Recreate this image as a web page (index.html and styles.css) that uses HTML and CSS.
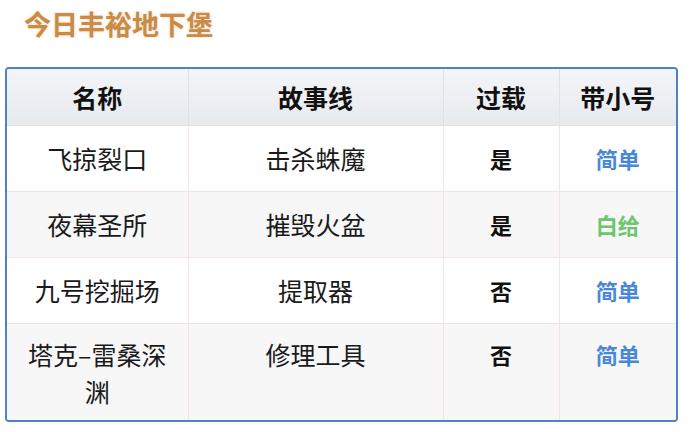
FILE: index.html
```html
<!DOCTYPE html>
<html lang="zh">
<head>
<meta charset="utf-8">
<link rel="stylesheet" href="styles.css">
</head>
<body>
<h1 class="title">今日丰裕地下堡</h1>
<div class="card">
  <table class="grid">
    <colgroup>
      <col class="c1"><col class="c2"><col class="c3"><col class="c4">
    </colgroup>
    <thead>
      <tr><th>名称</th><th>故事线</th><th>过载</th><th>带小号</th></tr>
    </thead>
    <tbody>
      <tr class="r"><td>飞掠裂口</td><td>击杀蛛魔</td><td class="yn">是</td><td class="easy">简单</td></tr>
      <tr class="r alt"><td>夜幕圣所</td><td>摧毁火盆</td><td class="yn">是</td><td class="free">白给</td></tr>
      <tr class="r"><td>九号挖掘场</td><td>提取器</td><td class="yn">否</td><td class="easy">简单</td></tr>
      <tr class="r alt tall"><td class="wrap"><div class="lines">塔克–雷桑深渊</div></td><td>修理工具</td><td class="yn">否</td><td class="easy">简单</td></tr>
    </tbody>
  </table>
</div>
</body>
</html>
```

FILE: styles.css
```css
html, body {
  margin: 0;
  padding: 0;
  background: #ffffff;
  font-family: "Noto Sans CJK SC", "Noto Sans", sans-serif;
  color: #1a1a1a;
}
.title {
  margin: 0;
  padding: 8px 0 0 24px;
  font-size: 27px;
  line-height: 32px;
  font-weight: 700;
  color: #c98b45;
  text-shadow: 0 0 3px rgba(201, 139, 69, 0.35);
}
.card {
  margin: 27px 0 0 5px;
  width: 669px;
  border: 2px solid #4f82c4;
  border-radius: 4px;
  overflow: hidden;
}
.grid {
  width: 669px;
  border-collapse: collapse;
  table-layout: fixed;
}
.c1 { width: 181px; }
.c2 { width: 255px; }
.c3 { width: 116px; }
.c4 { width: 117px; }
th {
  height: 56px;
  padding: 0;
  font-size: 25px;
  font-weight: 700;
  color: #111;
  background: linear-gradient(#f4f5f8, #e6e9ee);
  border-right: 1px solid #dfe2e7;
  border-bottom: 1px solid #eadfe2;
  text-align: center;
  vertical-align: middle;
}
td {
  padding: 0 10px;
  font-size: 25px;
  line-height: 37px;
  text-align: center;
  vertical-align: middle;
  border-right: 1px solid #f3e3e5;
  border-bottom: 1px solid #f3e3e5;
}
th:last-child, td:last-child { border-right: none; }
.r td { height: 65px; }
.alt td { background: #f7f7f8; }
.tall td {
  height: 96px;
  border-bottom: none;
  vertical-align: top;
  padding-top: 12px;
  padding-bottom: 0;
  box-sizing: border-box;
}
.wrap { padding-left: 12px; padding-right: 12px; }
.lines { line-height: 37px; height: 74px; overflow: hidden; }
.yn { font-size: 22px; font-weight: 700; color: #111; }
.easy { font-size: 22px; font-weight: 700; color: #4a88d6; }
.free { font-size: 22px; font-weight: 700; color: #6cc66c; }
```
